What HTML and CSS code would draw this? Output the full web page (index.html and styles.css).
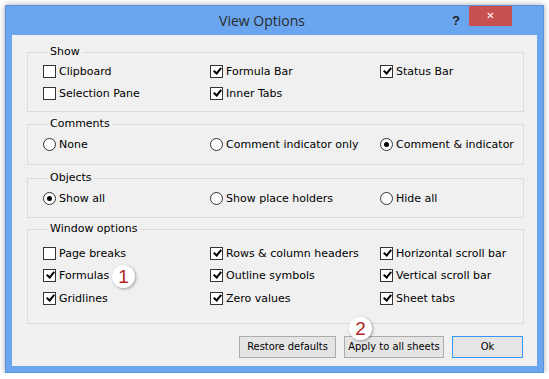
FILE: index.html
```html
<!DOCTYPE html>
<html lang="en">

<head>
    <meta charset="UTF-8">
    <title>View Options</title>
    <link rel="stylesheet" href="styles.css">
</head>

<body>
    <div class="window">
        <div class="titlebar">
            <div class="title">View Options</div>
            <div class="help">?</div>
            <div class="close">&#x2715;</div>
        </div>

        <div class="client">
            <fieldset class="group group-show">
                <legend>Show</legend>
                <div class="grid">
                    <label class="opt"><span class="box"></span>Clipboard</label>
                    <label class="opt"><span class="box checked"></span>Formula Bar</label>
                    <label class="opt"><span class="box checked"></span>Status Bar</label>
                    <label class="opt"><span class="box"></span>Selection Pane</label>
                    <label class="opt"><span class="box checked"></span>Inner Tabs</label>
                </div>
            </fieldset>

            <fieldset class="group group-comments">
                <legend>Comments</legend>
                <div class="grid">
                    <label class="opt"><span class="radio"></span>None</label>
                    <label class="opt"><span class="radio"></span>Comment indicator only</label>
                    <label class="opt"><span class="radio on"></span>Comment &amp; indicator</label>
                </div>
            </fieldset>

            <fieldset class="group group-objects">
                <legend>Objects</legend>
                <div class="grid">
                    <label class="opt"><span class="radio on"></span>Show all</label>
                    <label class="opt"><span class="radio"></span>Show place holders</label>
                    <label class="opt"><span class="radio"></span>Hide all</label>
                </div>
            </fieldset>

            <fieldset class="group group-window">
                <legend>Window options</legend>
                <div class="grid tall">
                    <label class="opt"><span class="box"></span>Page breaks</label>
                    <label class="opt"><span class="box checked"></span>Rows &amp; column headers</label>
                    <label class="opt"><span class="box checked"></span>Horizontal scroll bar</label>
                    <label class="opt"><span class="box checked"></span>Formulas<span class="badge badge-one">1</span></label>
                    <label class="opt"><span class="box checked"></span>Outline symbols</label>
                    <label class="opt"><span class="box checked"></span>Vertical scroll bar</label>
                    <label class="opt"><span class="box checked"></span>Gridlines</label>
                    <label class="opt"><span class="box checked"></span>Zero values</label>
                    <label class="opt"><span class="box checked"></span>Sheet tabs</label>
                </div>
            </fieldset>

            <div class="buttons">
                <button class="btn btn-restore">Restore defaults</button>
                <button class="btn btn-apply">Apply to all sheets<span class="badge badge-two">2</span></button>
                <button class="btn btn-ok">Ok</button>
            </div>
        </div>
    </div>
</body>

</html>
```

FILE: styles.css
```css
body {
    margin: 0;
    background-color: #fff;
    font-family: "DejaVu Sans", sans-serif;
    font-size: 11px;
    color: #000;
}

.window {
    margin: 5px 0 0 5px;
    width: 537px;
    height: 366px;
    background-color: #6aa6f0;
    border: 1px solid #5b91da;
    box-shadow: 0 0 6px rgba(0, 0, 0, 0.35);
    display: flex;
    flex-direction: column;
}

.titlebar {
    height: 29px;
    display: grid;
    grid-template-columns: 1fr 17px 43px;
    column-gap: 0;
    align-items: start;
    padding-right: 31px;
}

.title {
    text-align: center;
    padding-left: 92px;
    padding-right: 26px;
    line-height: 29px;
    font-family: "Open Sans", sans-serif;
    font-size: 14px;
    color: #2b2b2b;
}

.help {
    font-family: "Liberation Sans", sans-serif;
    font-weight: bold;
    font-size: 13px;
    color: #222;
    margin-top: 7px;
}

.close {
    height: 20px;
    background-color: #c75050;
    color: #fff;
    font-size: 10px;
    font-weight: bold;
    line-height: 20px;
    text-align: center;
}

.client {
    flex: 1;
    margin: 0 6px 6px 6px;
    background-color: #f0f0f0;
    padding: 10px 13px 0 15px;
}

.group {
    margin: 0;
    padding: 1px 0 7px 15px;
    border: 1px solid #dcdcdc;
    min-width: 0;
}

.group legend {
    margin-left: 5px;
    padding: 0 2px;
    line-height: 14px;
}

.group-comments {
    margin-top: 5px;
    padding-top: 2px;
    padding-bottom: 9px;
}

.group-objects {
    margin-top: 6px;
    padding-top: 2px;
    padding-bottom: 8px;
}

.group-window {
    margin-top: 4px;
    padding-top: 6px;
    padding-bottom: 13px;
}

.grid {
    display: grid;
    grid-template-columns: 167px 170px 1fr;
    grid-auto-rows: 22px;
}

.grid.tall {
    grid-auto-rows: 22.5px;
}

.opt {
    display: flex;
    align-items: center;
    gap: 3px;
    white-space: nowrap;
    position: relative;
}

.box {
    width: 11px;
    height: 11px;
    border: 1px solid #333;
    background-color: #fff;
    position: relative;
    flex-shrink: 0;
}

.box.checked::after {
    content: "";
    position: absolute;
    left: 3.5px;
    top: 0;
    width: 3px;
    height: 6px;
    border: solid #000;
    border-width: 0 2px 2px 0;
    transform: rotate(40deg);
}

.radio {
    width: 11px;
    height: 11px;
    border: 1px solid #333;
    border-radius: 50%;
    background-color: #fff;
    display: flex;
    align-items: center;
    justify-content: center;
    flex-shrink: 0;
}

.radio.on::after {
    content: "";
    width: 5px;
    height: 5px;
    border-radius: 50%;
    background-color: #000;
}

.buttons {
    display: flex;
    justify-content: flex-end;
    gap: 8px;
    margin-top: 12px;
    padding-right: 1px;
}

.btn {
    height: 22px;
    padding: 0;
    background-color: #e5e5e5;
    border: 1px solid #acacac;
    font-family: "DejaVu Sans Condensed", "DejaVu Sans", sans-serif;
    font-size: 11px;
    color: #000;
    position: relative;
}

.btn-restore {
    width: 97px;
}

.btn-apply {
    width: 100px;
}

.btn-ok {
    width: 71px;
    border-color: #3399ff;
}

.badge {
    position: absolute;
    width: 23px;
    height: 23px;
    border-radius: 50%;
    background-color: #fff;
    box-shadow: 1px 1px 3px rgba(0, 0, 0, 0.35);
    color: #b3281f;
    font-family: "Liberation Sans", sans-serif;
    font-size: 19px;
    line-height: 23px;
    text-align: center;
}

.badge-one {
    left: 69px;
    top: 0;
}

.badge-two {
    left: 4px;
    top: -20px;
}
```
